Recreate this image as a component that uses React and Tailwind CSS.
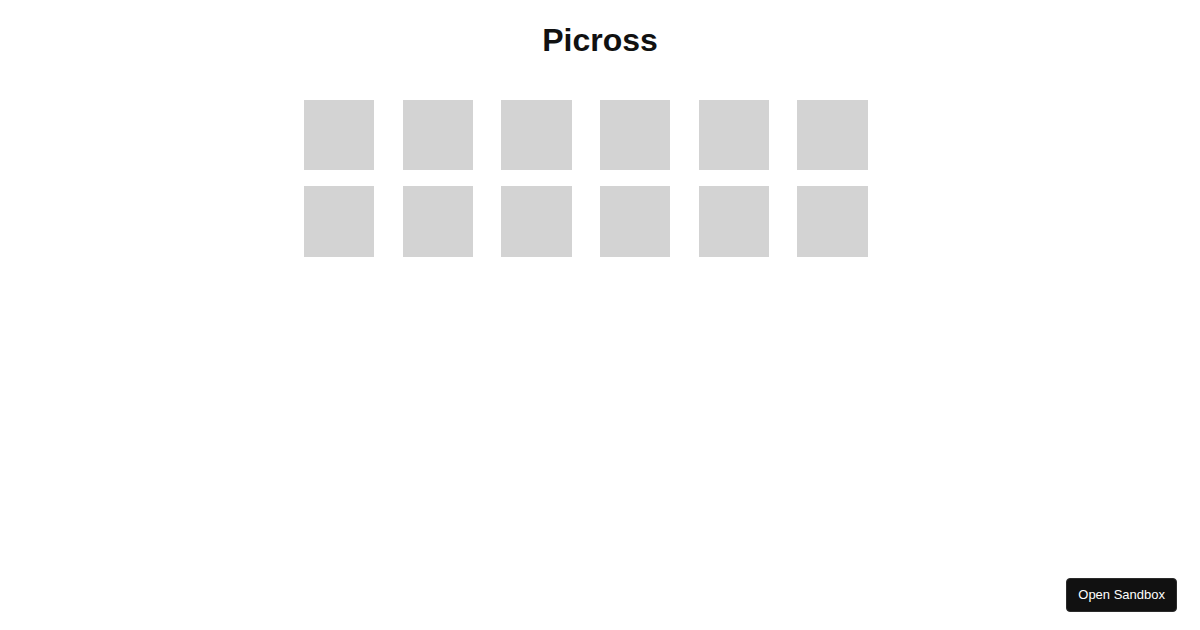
// App.jsx

import React, { useState } from "react";

const PUZZLE_COUNT = 12;
const puzzles = Array.from({ length: PUZZLE_COUNT }, (_, i) => i + 1);

// One square of the puzzle picker
function PuzzleTile({ number, selected, onSelect }) {
  return (
    <button
      type="button"
      aria-label={`Puzzle ${number}`}
      aria-pressed={selected}
      onClick={() => onSelect(number)}
      className="block w-5/7 aspect-square bg-[#d3d3d3] cursor-pointer"
    />
  );
}

function App() {
  const [selected, setSelected] = useState(null);

  return (
    <div className="min-h-screen bg-white p-2 font-['Liberation_Sans',Arial,sans-serif] text-[#111111]">
      <h1 className="mt-3 text-center text-[32px] leading-10 font-bold">Picross</h1>

      <main className="mx-auto mt-10 grid w-1/2 grid-cols-6 gap-y-4">
        {puzzles.map((number) => (
          <PuzzleTile
            key={number}
            number={number}
            selected={selected === number}
            onSelect={setSelected}
          />
        ))}
      </main>

      <button
        type="button"
        className="fixed right-[23px] bottom-[18px] rounded-sm border border-[#2b2b2b] bg-[#111111] px-[11px] py-1.5 text-[13px] leading-5 text-white cursor-pointer"
      >
        Open Sandbox
      </button>
    </div>
  );
}

export default App;
